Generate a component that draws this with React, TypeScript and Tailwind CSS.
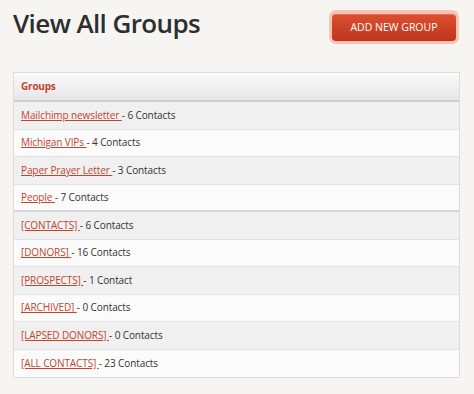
const groups = [
  { name: "Mailchimp newsletter ", count: "6 Contacts" },
  { name: "Michigan VIPs ", count: "4 Contacts" },
  { name: "Paper Prayer Letter ", count: "3 Contacts" },
  { name: "People ", count: "7 Contacts", divider: true },
  { name: "[CONTACTS] ", count: "6 Contacts" },
  { name: "[DONORS] ", count: "16 Contacts" },
  { name: "[PROSPECTS] ", count: "1 Contact" },
  { name: "[ARCHIVED] ", count: "0 Contacts" },
  { name: "[LAPSED DONORS] ", count: "0 Contacts" },
  { name: "[ALL CONTACTS] ", count: "23 Contacts" },
];

export default function App() {
  return (
    <div
      className="w-[474px] h-[394px] bg-[#f6f5f1] px-[13px] pt-[5px] text-[#333]"
      style={{ fontFamily: '"Open Sans", "Liberation Sans", sans-serif' }}
    >
      <Header />
      <GroupsTable />
    </div>
  );
}

function Header() {
  return (
    <div className="flex flex-row justify-between items-start h-[67px]">
      <h1 className="text-[26px] leading-[36px] font-semibold text-[#2e2e2e] tracking-[-0.6px]">
        View All Groups
      </h1>
      <div className="mt-[5px] mr-[2px] p-[3px] rounded-[7px] bg-[#f7c3b3]">
        <button className="h-[27px] w-[124px] rounded-[4px] bg-gradient-to-b from-[#dd4f31] to-[#bd361b] text-white text-[10.5px] shadow-[inset_0_1px_0_rgba(255,255,255,0.2)]">
          ADD NEW GROUP
        </button>
      </div>
    </div>
  );
}

function GroupsTable() {
  return (
    <div className="w-[447px] border border-[#dcdcdc] bg-white">
      <div className="h-[29px] flex items-center px-[7px] bg-gradient-to-b from-[#fbfbfb] to-[#e6e6e6] border-b-2 border-[#cfcfcf]">
        <span className="text-[10px] font-bold text-[#c2452b] tracking-[-0.2px]">
          Groups
        </span>
      </div>
      {groups.map((g, i) => (
        <div
          key={g.name}
          className={
            "h-[27.5px] flex items-center px-[7px] text-[10px] tracking-[-0.1px] " +
            (i % 2 === 0 ? "bg-[#f0f0f0] " : "bg-[#fbfbfb] ") +
            (i === groups.length - 1
              ? ""
              : g.divider
              ? "border-b-2 border-[#d6d6d6]"
              : "border-b border-[#e2e2e2]")
          }
        >
          <a href="#" className="text-[#c2452b] underline whitespace-pre">
            {g.name}
          </a>
          <span className="whitespace-pre">- {g.count}</span>
        </div>
      ))}
    </div>
  );
}
